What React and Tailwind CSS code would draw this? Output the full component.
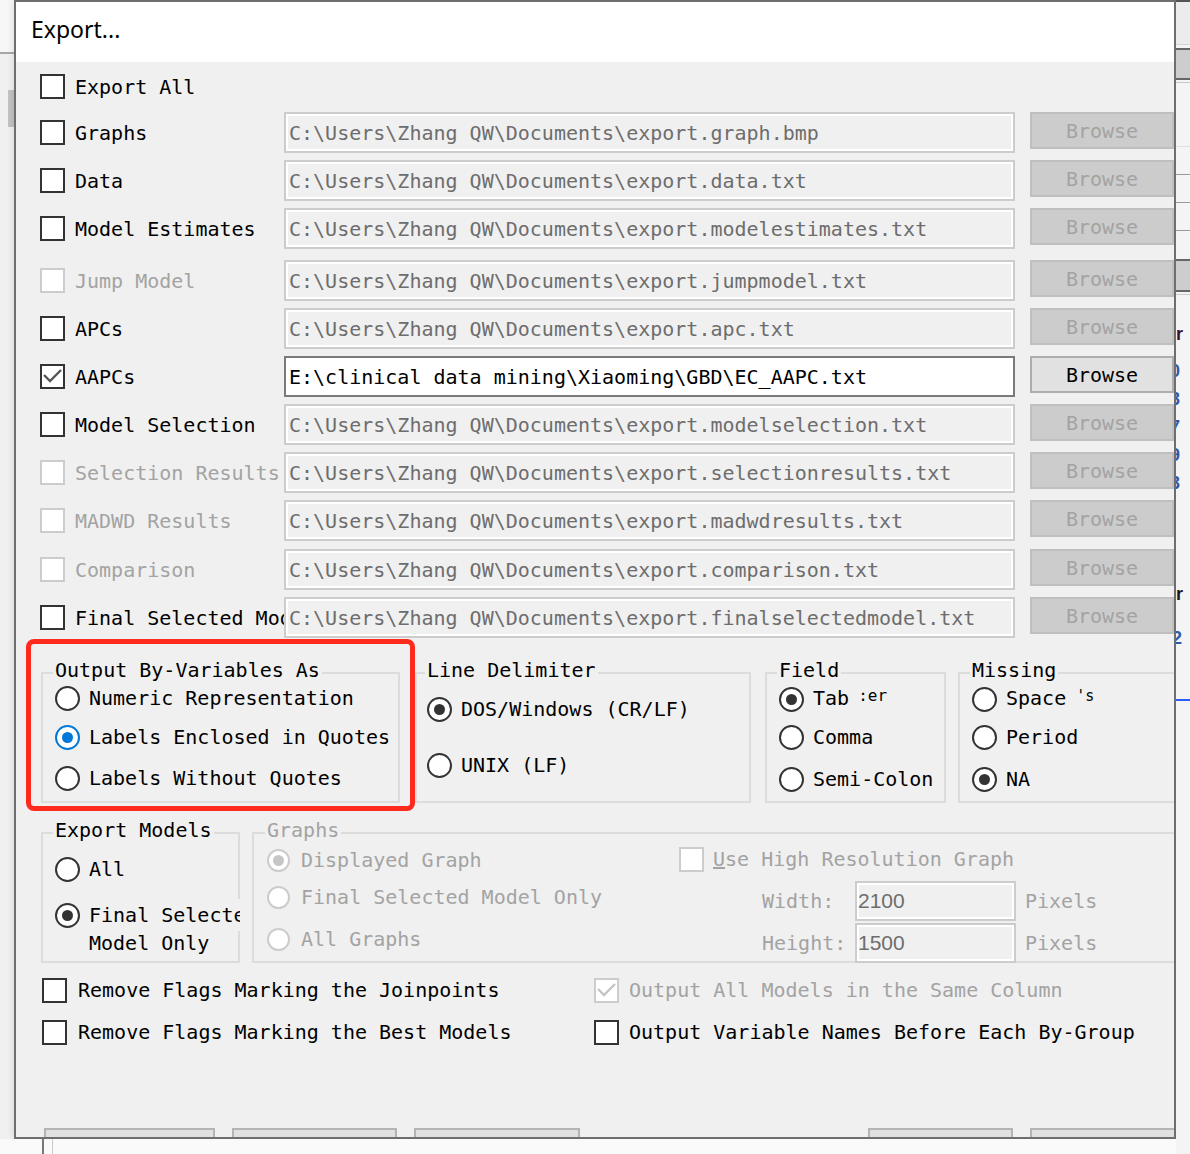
import React from "react";

const MONO = "font-['DejaVu_Sans_Mono','Liberation_Mono',monospace]";

const rows = [
  { label: "Graphs", path: "C:\\Users\\Zhang QW\\Documents\\export.graph.bmp", mt: "mt-[5px]" },
  { label: "Data", path: "C:\\Users\\Zhang QW\\Documents\\export.data.txt", mt: "mt-[7px]" },
  { label: "Model Estimates", path: "C:\\Users\\Zhang QW\\Documents\\export.modelestimates.txt", mt: "mt-[7px]" },
  { label: "Jump Model", path: "C:\\Users\\Zhang QW\\Documents\\export.jumpmodel.txt", mt: "mt-[11px]", off: true },
  { label: "APCs", path: "C:\\Users\\Zhang QW\\Documents\\export.apc.txt", mt: "mt-[7px]" },
  { label: "AAPCs", path: "E:\\clinical data mining\\Xiaoming\\GBD\\EC_AAPC.txt", mt: "mt-[7px]", on: true },
  { label: "Model Selection", path: "C:\\Users\\Zhang QW\\Documents\\export.modelselection.txt", mt: "mt-[7px]" },
  { label: "Selection Results", path: "C:\\Users\\Zhang QW\\Documents\\export.selectionresults.txt", mt: "mt-[7px]", off: true },
  { label: "MADWD Results", path: "C:\\Users\\Zhang QW\\Documents\\export.madwdresults.txt", mt: "mt-[7px]", off: true },
  { label: "Comparison", path: "C:\\Users\\Zhang QW\\Documents\\export.comparison.txt", mt: "mt-[8px]", off: true },
  { label: "Final Selected Model", path: "C:\\Users\\Zhang QW\\Documents\\export.finalselectedmodel.txt", mt: "mt-[7px]" },
];

function Check({ checked, disabled }) {
  return (
    <span
      className={`flex h-[25px] w-[25px] shrink-0 items-center justify-center border-2 bg-white ${
        disabled ? "border-[#cccccc]" : "border-[#333333]"
      }`}
    >
      {checked && (
        <svg width="21" height="21" viewBox="0 0 21 21">
          <polyline
            points="2,9 8,15 19,4"
            fill="none"
            stroke={disabled ? "#c4c4c4" : "#555555"}
            strokeWidth="2.4"
          />
        </svg>
      )}
    </span>
  );
}

function Radio({ checked, blue, disabled, small }) {
  const ring = disabled ? "border-[#cccccc]" : blue ? "border-[#0078d7]" : "border-[#333333]";
  const dot = disabled ? "bg-[#c6c6c6]" : blue ? "bg-[#0078d7]" : "bg-[#333333]";
  return (
    <span
      className={`flex shrink-0 items-center justify-center rounded-full border-2 bg-white ${ring} ${
        small ? "h-[23px] w-[23px]" : "h-[25px] w-[25px]"
      }`}
    >
      {checked && <span className={`h-[11px] w-[11px] rounded-full ${dot}`} />}
    </span>
  );
}

function Opt({ children, checked, blue, disabled, small, className = "" }) {
  return (
    <div className={`flex h-[28px] items-center whitespace-nowrap ${className}`}>
      <Radio checked={checked} blue={blue} disabled={disabled} small={small} />
      <span className={`${small ? "ml-[11px]" : "ml-[9px]"} ${disabled ? "text-[#a3a3a3]" : "text-black"}`}>
        {children}
      </span>
    </div>
  );
}

function Group({ title, titleMl = "-ml-[2px]", disabled, className, children }) {
  return (
    <div className={`h-[131px] shrink-0 border-2 border-[#dcdcdc] ${className}`}>
      <div
        className={`-mt-[16px] w-fit bg-[#f0f0f0] px-[2px] leading-[24px] ${titleMl} ${
          disabled ? "text-[#a3a3a3]" : "text-black"
        }`}
      >
        {title}
      </div>
      {children}
    </div>
  );
}

function PathRow({ label, path, mt, on, off }) {
  return (
    <div className={`flex h-[41px] items-center ${mt}`}>
      <div className="ml-[24px]">
        <Check checked={on} disabled={off} />
      </div>
      <div
        className={`ml-[10px] w-[209px] shrink-0 overflow-hidden whitespace-nowrap ${
          off ? "text-[#a3a3a3]" : "text-black"
        }`}
      >
        {label}
      </div>
      <div
        className={`flex h-[41px] w-[731px] shrink-0 items-center overflow-hidden whitespace-nowrap border-2 pl-[3px] ${
          on
            ? "border-[#7a7a7a] bg-white text-black"
            : "border-[#cccccc] bg-[#f0f0f0] text-[#6d6d6d] shadow-[inset_0_0_0_2px_#ffffff]"
        }`}
      >
        {path}
      </div>
      <div
        className={`ml-[15px] flex h-[37px] w-[144px] shrink-0 items-center justify-center self-start border-2 ${
          on ? "border-[#adadad] bg-[#e1e1e1] text-black" : "border-[#bfbfbf] bg-[#cccccc] text-[#a3a3a3]"
        }`}
      >
        Browse
      </div>
    </div>
  );
}

function PxInput({ value }) {
  return (
    <div className="flex h-[40px] w-[161px] shrink-0 items-center border-2 border-[#cccccc] bg-[#f0f0f0] pl-[1px] font-['Liberation_Sans',Arial,sans-serif] text-[21px] text-[#6d6d6d] shadow-[inset_0_0_0_2px_#ffffff]">
      {value}
    </div>
  );
}

function LeftStrip() {
  return (
    <div className="flex h-[1154px] w-[14px] shrink-0 flex-col bg-[#f0f0f0]">
      <div className="h-[52px] bg-[#f7f7f7]" />
      <div className="h-[2px] bg-[#a8a8a8]" />
      <div className="h-[36px]" />
      <div className="ml-[8px] h-[37px] bg-[#c3c3c3]" />
      <div className="flex-1" />
      <div className="h-[15px] bg-[#fafafa]" />
    </div>
  );
}

function RightStrip() {
  return (
    <div className="flex h-[1154px] w-[14px] shrink-0 flex-col overflow-hidden bg-[#f4f4f4] font-['Liberation_Sans',Arial,sans-serif] font-bold">
      <div className="h-[2px] bg-[#555555]" />
      <div className="h-[42px] bg-[#ececec]" />
      <div className="h-[1px] bg-[#d5d5d5]" />
      <div className="h-[3px]" />
      <div className="h-[2px] bg-[#666666]" />
      <div className="h-[28px] bg-[#cdcdcd]" />
      <div className="h-[2px] bg-[#666666]" />
      <div className="h-[2px]" />
      <div className="h-[1px] bg-[#c8c8c8]" />
      <div className="h-[63px]" />
      <div className="h-[1px] bg-[#e0e0e0]" />
      <div className="h-[27px]" />
      <div className="h-[1px] bg-[#9a9a9a]" />
      <div className="h-[27px]" />
      <div className="h-[1px] bg-[#9a9a9a]" />
      <div className="h-[27px]" />
      <div className="h-[1px] bg-[#9a9a9a]" />
      <div className="h-[28px]" />
      <div className="h-[2px] bg-[#666666]" />
      <div className="h-[29px] bg-[#cdcdcd]" />
      <div className="h-[2px] bg-[#666666]" />
      <div className="h-[2px]" />
      <div className="h-[1px] bg-[#cccccc]" />
      <div className="mt-[30px] text-[18px] leading-[18px] text-[#3a1030]">r</div>
      <div className="-ml-[6px] mt-[14px] flex flex-col text-[18px] leading-[28px] text-[#2f5aa8]">
        <span>0</span>
        <span>3</span>
        <span>7</span>
        <span>9</span>
        <span>3</span>
      </div>
      <div className="mt-[88px] text-[18px] leading-[18px] text-[#1a1a1a]">r</div>
      <div className="-ml-[4px] mt-[26px] text-[18px] leading-[18px] text-[#2f5aa8]">2</div>
      <div className="mt-[52px] h-[2px] bg-[#2f5bff]" />
    </div>
  );
}

export default function App() {
  return (
    <div className={`flex h-[1154px] w-[1190px] overflow-hidden bg-[#f7f7f7] ${MONO}`}>
      <LeftStrip />
      <div className="flex w-[1162px] shrink-0 flex-col">
        <div className="flex h-[1139px] flex-col border-2 border-[#6e6e6e] bg-white shadow-[0_0_8px_rgba(0,0,0,0.12)]">
          <div className="h-[60px] bg-white pl-[15px] pt-[12px] font-['Noto_Sans','Open_Sans',sans-serif] text-[23px] leading-[31px] text-black">
            Export...
          </div>
          <div className="relative h-[1075px] overflow-hidden bg-[#f0f0f0] text-[20px] leading-[24px]">
            <div className="mt-[4px] flex h-[41px] items-center">
              <div className="ml-[24px]">
                <Check />
              </div>
              <span className="ml-[10px] text-black">Export All</span>
            </div>

            {rows.map((r) => (
              <PathRow key={r.label} {...r} />
            ))}

            <div className="mt-[34px] flex items-start">
              <Group title="Output By-Variables As" className="ml-[25px] w-[359px] pl-[12px]">
                <Opt className="mt-[2px]">Numeric Representation</Opt>
                <Opt className="mt-[11px]" checked blue>
                  Labels Enclosed in Quotes
                </Opt>
                <Opt className="mt-[13px]">Labels Without Quotes</Opt>
              </Group>
              <Group title="Line Delimiter" className="ml-[15px] w-[336px] pl-[10px]">
                <Opt className="mt-[13px]" checked>
                  DOS/Windows (CR/LF)
                </Opt>
                <Opt className="mt-[28px]">UNIX (LF)</Opt>
              </Group>
              <Group title="Field" className="ml-[14px] w-[181px] pl-[12px]">
                <Opt className="mt-[3px]" checked>
                  Tab<span className="relative -top-[4px] ml-[9px] text-[16px]">:er</span>
                </Opt>
                <Opt className="mt-[10px]">Comma</Opt>
                <Opt className="mt-[14px]">Semi-Colon</Opt>
              </Group>
              <Group title="Missing" className="ml-[12px] w-[240px] pl-[12px]">
                <Opt className="mt-[3px]">
                  Space<span className="relative -top-[4px] ml-[10px] text-[15px]">'s</span>
                </Opt>
                <Opt className="mt-[10px]">Period</Opt>
                <Opt className="mt-[14px]" checked>
                  NA
                </Opt>
              </Group>
            </div>

            <div className="mt-[29px] flex items-start">
              <Group title="Export Models" className="ml-[25px] w-[199px] pl-[12px]">
                <Opt className="mt-[13px]">All</Opt>
                <div className="mt-[16px] flex h-[32px] items-center">
                  <Radio checked />
                  <div className="ml-[9px] flex h-[32px] w-[151px] shrink-0 items-center overflow-hidden whitespace-nowrap bg-[#f0f0f0] text-black">
                    Final Selected
                  </div>
                </div>
                <div className="ml-[34px] whitespace-nowrap text-black">Model Only</div>
              </Group>
              <Group title="Graphs" titleMl="ml-[11px]" disabled className="ml-[12px] w-[960px]">
                <div className="flex">
                  <div className="w-[425px] shrink-0 pl-[13px]">
                    <Opt className="mt-[4px]" checked disabled small>
                      Displayed Graph
                    </Opt>
                    <Opt className="mt-[9px]" disabled small>
                      Final Selected Model Only
                    </Opt>
                    <Opt className="mt-[14px]" disabled small>
                      All Graphs
                    </Opt>
                  </div>
                  <div className="text-[#a3a3a3]">
                    <div className="mt-[3px] flex h-[28px] items-center whitespace-nowrap">
                      <Check disabled />
                      <span className="ml-[9px]">
                        <span className="underline">U</span>se High Resolution Graph
                      </span>
                    </div>
                    <div className="mt-[8px] flex h-[40px] items-center whitespace-nowrap">
                      <span className="ml-[83px] w-[93px] shrink-0">Width:</span>
                      <PxInput value="2100" />
                      <span className="ml-[9px]">Pixels</span>
                    </div>
                    <div className="mt-[2px] flex h-[40px] items-center whitespace-nowrap">
                      <span className="ml-[83px] w-[93px] shrink-0">Height:</span>
                      <PxInput value="1500" />
                      <span className="ml-[9px]">Pixels</span>
                    </div>
                  </div>
                </div>
              </Group>
            </div>

            <div className="mt-[13px] flex h-[28px] items-center whitespace-nowrap">
              <div className="ml-[26px] flex w-[552px] shrink-0 items-center">
                <Check />
                <span className="ml-[11px] text-black">Remove Flags Marking the Joinpoints</span>
              </div>
              <div className="flex items-center">
                <Check checked disabled />
                <span className="ml-[10px] text-[#a3a3a3]">Output All Models in the Same Column</span>
              </div>
            </div>
            <div className="mt-[14px] flex h-[28px] items-center whitespace-nowrap">
              <div className="ml-[26px] flex w-[552px] shrink-0 items-center">
                <Check />
                <span className="ml-[11px] text-black">Remove Flags Marking the Best Models</span>
              </div>
              <div className="flex items-center">
                <Check />
                <span className="ml-[10px] text-black">Output Variable Names Before Each By-Group</span>
              </div>
            </div>

            <div className="mt-[82px] flex text-black">
              <div className="ml-[28px] flex h-[40px] w-[171px] shrink-0 justify-center border-2 border-[#b4b4b4] bg-[#e1e1e1] pt-[3px]">Load</div>
              <div className="ml-[17px] flex h-[40px] w-[165px] shrink-0 justify-center border-2 border-[#b4b4b4] bg-[#e1e1e1] pt-[3px]">Save</div>
              <div className="ml-[17px] flex h-[40px] w-[166px] shrink-0 justify-center border-2 border-[#b4b4b4] bg-[#e1e1e1] pt-[3px]">Default</div>
              <div className="ml-[288px] flex h-[40px] w-[145px] shrink-0 justify-center border-2 border-[#b4b4b4] bg-[#e1e1e1] pt-[3px]">OK</div>
              <div className="ml-[17px] flex h-[40px] w-[150px] shrink-0 justify-center border-2 border-[#b4b4b4] bg-[#e1e1e1] pt-[3px]">Cancel</div>
            </div>

            <div className="pointer-events-none absolute left-[10px] top-[577px] h-[172px] w-[389px] rounded-[8px] border-[5px] border-[#fe2a1d]" />
          </div>
        </div>
        <div className="flex h-[15px] bg-[#fafafa]">
          <div className="ml-[28px] h-full w-[2px] bg-[#777777]" />
          <div className="ml-[8px] h-full w-[1px] bg-[#cccccc]" />
        </div>
      </div>
      <RightStrip />
    </div>
  );
}
